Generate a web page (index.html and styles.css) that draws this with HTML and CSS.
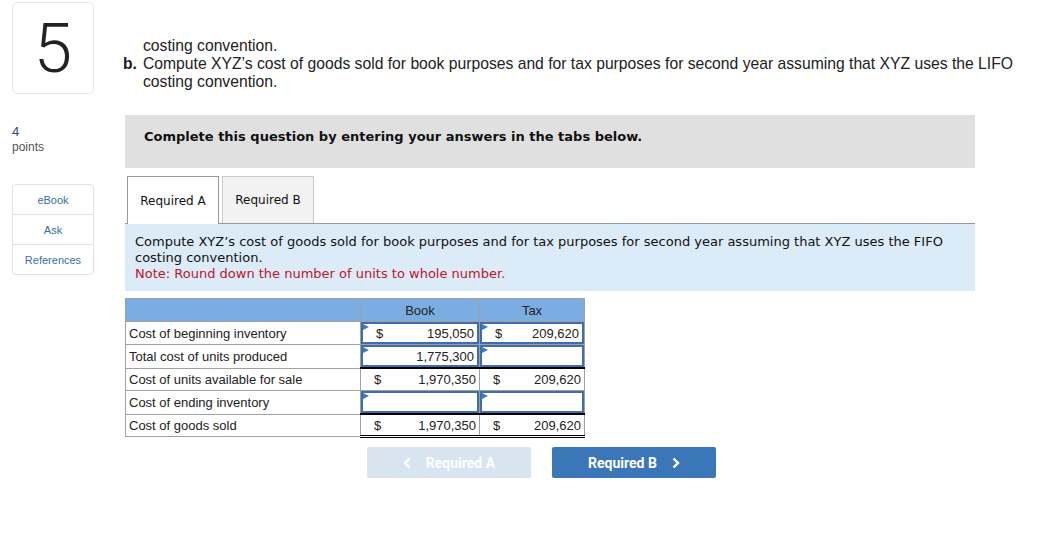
FILE: index.html
```html
<!DOCTYPE html>
<html>
<head>
<meta charset="utf-8">
<link rel="stylesheet" href="styles.css">
</head>
<body>
<div class="page">
  <aside class="side">
    <div class="qnum">5</div>
    <div class="pts"><div class="pts-n">4</div><div class="pts-l">points</div></div>
    <div class="links">
      <div class="link">eBook</div>
      <div class="link">Ask</div>
      <div class="link">References</div>
    </div>
  </aside>
  <main class="main">
    <div class="qtext">
      <div class="line indent">costing convention.</div>
      <div class="line"><b class="lbl">b.</b>Compute XYZ’s cost of goods sold for book purposes and for tax purposes for second year assuming that XYZ uses the LIFO</div>
      <div class="line indent">costing convention.</div>
    </div>
    <div class="banner">Complete this question by entering your answers in the tabs below.</div>
    <div class="tabs">
      <div class="tab active">Required A</div>
      <div class="tab">Required B</div>
    </div>
    <div class="info">
      <div>Compute XYZ’s cost of goods sold for book purposes and for tax purposes for second year assuming that XYZ uses the FIFO costing convention.</div>
      <div class="note">Note: Round down the number of units to whole number.</div>
    </div>
    <table class="grid">
      <tr class="head">
        <th class="c-label"></th>
        <th class="c-book">Book</th>
        <th class="c-tax">Tax</th>
      </tr>
      <tr>
        <td class="c-label">Cost of beginning inventory</td>
        <td class="c-book"><div class="inp"><span class="cur">$</span><span class="val">195,050</span></div></td>
        <td class="c-tax"><div class="inp"><span class="cur">$</span><span class="val">209,620</span></div></td>
      </tr>
      <tr>
        <td class="c-label">Total cost of units produced</td>
        <td class="c-book"><div class="inp"><span class="cur"></span><span class="val">1,775,300</span></div></td>
        <td class="c-tax"><div class="inp"><span class="cur"></span><span class="val"></span></div></td>
      </tr>
      <tr class="total">
        <td class="c-label">Cost of units available for sale</td>
        <td class="c-book"><div class="out"><span class="cur">$</span><span class="val">1,970,350</span></div></td>
        <td class="c-tax"><div class="out"><span class="cur">$</span><span class="val">209,620</span></div></td>
      </tr>
      <tr>
        <td class="c-label">Cost of ending inventory</td>
        <td class="c-book"><div class="inp"><span class="cur"></span><span class="val"></span></div></td>
        <td class="c-tax"><div class="inp"><span class="cur"></span><span class="val"></span></div></td>
      </tr>
      <tr class="final">
        <td class="c-label">Cost of goods sold</td>
        <td class="c-book"><div class="out"><span class="cur">$</span><span class="val">1,970,350</span></div></td>
        <td class="c-tax"><div class="out"><span class="cur">$</span><span class="val">209,620</span></div></td>
      </tr>
    </table>
    <div class="nav">
      <div class="btn prev"><svg class="chev" width="8" height="12" viewBox="0 0 8 12"><path d="M6.5 1.5 L2 6 L6.5 10.5" fill="none" stroke="#fff" stroke-width="2.4"/></svg>Required A</div>
      <div class="btn next">Required B<svg class="chev" width="8" height="12" viewBox="0 0 8 12"><path d="M1.5 1.5 L6 6 L1.5 10.5" fill="none" stroke="#fff" stroke-width="2.4"/></svg></div>
    </div>
  </main>
</div>
</body>
</html>
```

FILE: styles.css
```css
* { box-sizing: border-box; }
html, body { margin: 0; padding: 0; background: #fff; }
body { font-family: "Liberation Sans", Arial, sans-serif; color: #222; }

.page { display: flex; align-items: flex-start; }

.side { width: 123px; padding-left: 12px; flex: none; }
.qnum {
  width: 82px; height: 92px; margin-top: 2px;
  border: 1px solid #e6e6e6; border-radius: 5px;
  display: flex; align-items: center; justify-content: center;
  font-family: "Roboto", sans-serif; font-weight: 300; font-size: 69px; color: #222;
  line-height: 1;
}
.pts { margin-top: 30px; }
.pts-n { font-size: 13px; color: #1b4e82; line-height: 15px; }
.pts-l { font-size: 12px; color: #555; line-height: 16px; }
.links {
  margin-top: 29px; width: 82px;
  border: 1px solid #e2e2e2; border-radius: 4px;
}
.link {
  height: 30px; display: flex; align-items: center; justify-content: center;
  font-size: 11px; color: #3a6ea8; border-top: 1px solid #e2e2e2;
}
.link:first-child { border-top: none; height: 29px; }

.main { flex: none; width: 880px; padding-top: 37px; }
.qtext { font-size: 15.7px; line-height: 18px; color: #222; }
.line { padding-left: 20px; white-space: nowrap; }
.line:not(.indent) { padding-left: 0; }
.lbl { display: inline-block; width: 20px; color: #1a1a1a; }

.banner {
  margin: 24px 0 0 2px; width: 850px; height: 53px;
  background: #e0e0e0; padding: 14px 0 0 19px; line-height: 16px;
  font-family: "DejaVu Sans", Verdana, sans-serif; font-weight: bold; font-size: 13px; color: #111;
}

.tabs {
  margin: 8px 0 0 2px; width: 850px; display: flex; gap: 3px;
  padding-left: 2px; border-bottom: 1px solid #999; height: 48px;
}
.tab {
  width: 92px; height: 47px; display: flex; align-items: center; justify-content: center;
  font-family: "DejaVu Sans", Verdana, sans-serif; font-size: 12px; color: #111;
  background: #f2f2f2; border: 1px solid #ccc; border-bottom: none;
}
.tab.active { background: #fff; border-color: #999; height: 48px; margin-bottom: -1px; }

.info {
  margin-left: 2px; width: 850px; background: #dbebf8;
  padding: 10px 10px 9px 10px;
  font-family: "DejaVu Sans", Verdana, sans-serif; font-size: 13px; line-height: 16px; color: #111;
}
.note { color: #c0142b; }

.grid {
  margin: 7px 0 0 2px; border-collapse: collapse;
  font-family: "Liberation Sans", Arial, sans-serif; font-size: 13px; color: #222;
}
.grid th, .grid td { border: 1px solid #a0a0a0; padding: 0; height: 22px; }
.grid .head th { background: #7bade2; font-weight: normal; text-align: center; color: #222; height: 23px; font-size: 13px; }
.c-label { width: 235px; padding-left: 3px !important; text-align: left; }
.c-book { width: 119px; }
.c-tax { width: 105px; }
.inp, .out {
  position: relative; height: 22px; display: flex; align-items: center;
  padding: 0 3px 0 13px;
}
.out { height: 21px; }
.final .out { height: 20px; }
.inp { border: 2px solid #3f6fab; }
.inp::before {
  content: ""; position: absolute; left: 0; top: 0;
  border-style: solid; border-width: 3px 0 3px 6px;
  border-color: transparent transparent transparent #3f7ac0;
}
.cur { width: 12px; flex: none; }
.val { flex: 1; text-align: right; }
.total td.c-book, .total td.c-tax { border-top: 2px solid #000; }
.final td.c-book, .final td.c-tax { border-top: 2px solid #000; border-bottom: 3px double #000; }

.nav { margin: 9px 0 0 244px; display: flex; gap: 21px; }
.btn {
  width: 164px; height: 31px; border-radius: 2px;
  display: flex; align-items: center; justify-content: center;
  font-family: "Roboto", sans-serif; font-weight: bold; font-size: 14px; color: #fff;
}
.btn.prev { background: #d9e4f1; }
.btn.next { background: #3b76b9; }
.prev .chev { margin-right: 15px; }
.next .chev { margin-left: 15px; }
```
